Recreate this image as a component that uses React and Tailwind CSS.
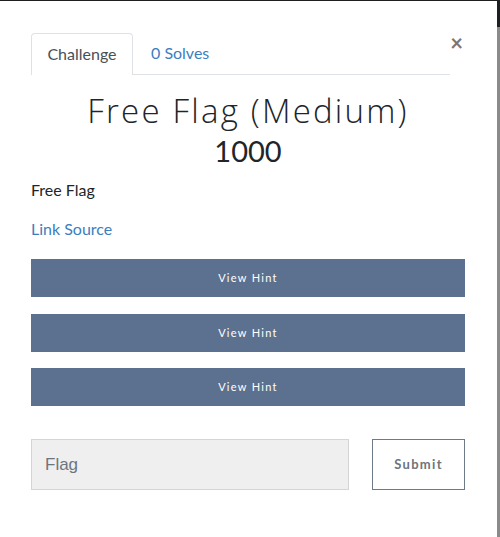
export default function App() {
  const hints = ['mb-[17px]', 'mb-[16px]', '']

  return (
    <div className="w-[500px] h-[537px] bg-[#1d1f21] pt-px flex overflow-hidden" style={{ fontFamily: 'Lato, "Open Sans", sans-serif' }}>
      <div className="w-[497px] h-[536px] bg-white pl-[31px] pr-[32px] pt-[32px]">
        {/* Tabs + close */}
        <div className="flex items-start">
          <div className="w-[420px] flex border-b border-[#dee2e6] h-[42px]">
            <div className="w-[102px] h-[42px] border border-b-0 border-[#dee2e6] rounded-t bg-white flex items-center justify-center text-[16px] text-[#495057] pb-px">
              Challenge
            </div>
            <div className="pl-[18px] h-[41px] flex items-center text-[16px] text-[#3b7ebf] pb-px">
              0 Solves
            </div>
          </div>
          <button className="ml-auto -mt-px mr-[2px] text-[#777] text-[22px] leading-none font-bold">
            ×
          </button>
        </div>

        {/* Title */}
        <div className="text-center mt-[16px]">
          <h2 className="text-[33px] leading-[40px] font-light tracking-[2.2px] text-[#212529]" style={{ fontFamily: '"Open Sans", sans-serif' }}>
            Free Flag (Medium)
          </h2>
          <div className="text-[29px] leading-[34px] text-[#212529] mt-[3px]">1000</div>
        </div>

        <p className="mt-[11px] text-[16px] leading-[22.5px] text-[#212529]">Free Flag</p>
        <a className="block mt-[16px] text-[16px] leading-[22.5px] text-[#3b7ebf]">Link Source</a>

        {/* Hints */}
        <div className="mt-[19px] w-[434px] flex flex-col">
          {hints.map((m, i) => (
            <button
              key={i}
              className={`h-[38px] w-full bg-[#5c718f] text-white text-[11px] tracking-[1.3px] flex items-center justify-center ${m}`}
            >
              View Hint
            </button>
          ))}
        </div>

        {/* Flag submit */}
        <div className="mt-[33px] w-[434px] flex gap-[23px]">
          <div className="w-[318px] h-[51px] bg-[#efefef] border border-[#d5d5d5] flex items-center pl-[13px] text-[17px] text-[#6c757d]" style={{ fontFamily: '"Liberation Sans", Arial, sans-serif' }}>
            Flag
          </div>
          <button className="w-[93px] h-[51px] border border-[#6c7a89] bg-white text-[13px] font-bold tracking-[1.3px] text-[#6c757d]">
            Submit
          </button>
        </div>
      </div>
      <div className="w-[3px] flex flex-col">
        <div className="h-[26px] bg-[#1d1f21]" />
        <div className="flex-1 bg-[#8a8a8a]" />
      </div>
    </div>
  )
}
